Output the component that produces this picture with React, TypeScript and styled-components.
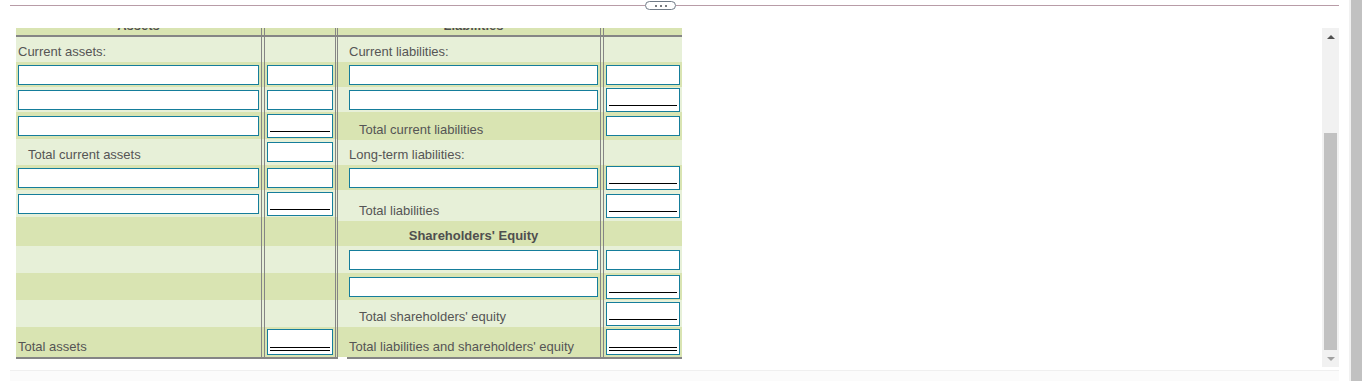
import React from 'react';
import styled, { createGlobalStyle } from 'styled-components';

type Amount = 'none' | 'plain' | 'single' | 'double';

interface Line {
  h: number; // row height
  text?: string;
  indent?: boolean; // subtotal lines sit a little to the right
  heading?: boolean; // bold centred section title
  field?: boolean; // account name input
  amount?: Amount;
}

const assetLines: Line[] = [
  { h: 25, text: 'Current assets:' },
  { h: 25, field: true, amount: 'plain' },
  { h: 25, field: true, amount: 'plain' },
  { h: 27, field: true, amount: 'single' },
  { h: 26, text: 'Total current assets', indent: true, amount: 'plain' },
  { h: 25, field: true, amount: 'plain' },
  { h: 27, field: true, amount: 'single' },
  { h: 29 },
  { h: 27 },
  { h: 27 },
  { h: 27 },
  { h: 30, text: 'Total assets', amount: 'double' },
];

const liabilityLines: Line[] = [
  { h: 25, text: 'Current liabilities:' },
  { h: 25, field: true, amount: 'plain' },
  { h: 25, field: true, amount: 'single' },
  { h: 28, text: 'Total current liabilities', indent: true, amount: 'plain' },
  { h: 25, text: 'Long-term liabilities:' },
  { h: 25, field: true, amount: 'single' },
  { h: 31, text: 'Total liabilities', indent: true, amount: 'single' },
  { h: 25, text: "Shareholders' Equity", heading: true },
  { h: 27, field: true, amount: 'plain' },
  { h: 27, field: true, amount: 'single' },
  { h: 27, text: "Total shareholders' equity", indent: true, amount: 'single' },
  { h: 30, text: "Total liabilities and shareholders' equity", amount: 'double' },
];

interface SideProps {
  title: string;
  lines: Line[];
  cols: string;
  spacer?: boolean; // right side has a narrow empty column in front
  last?: boolean;
}

const Side: React.FC<SideProps> = ({ title, lines, cols, spacer, last }) => (
  <Table>
    <HeadRow $cols={cols}>
      {spacer && <span />}
      <LabelCell>
        <Heading $lift={1}>{title}</Heading>
      </LabelCell>
      <AmountCell $last={last} />
    </HeadRow>
    {lines.map((line, i) => (
      <Row key={i} $cols={cols} $h={line.h} $dark={i % 2 === 1}>
        {spacer && <span />}
        <LabelCell $field={line.field}>
          {line.field && <TextBox />}
          {line.text &&
            (line.heading ? (
              <Heading $lift={0}>{line.text}</Heading>
            ) : (
              <Label $indent={line.indent}>{line.text}</Label>
            ))}
        </LabelCell>
        <AmountCell $last={last}>
          {line.amount && line.amount !== 'none' && (
            <AmountBox $kind={line.amount}>
              {line.amount !== 'plain' && <Underline $kind={line.amount} />}
            </AmountBox>
          )}
        </AmountCell>
      </Row>
    ))}
    <BottomRule $inset={spacer ? 9 : 0} />
  </Table>
);

const App: React.FC = () => (
  <>
    <GlobalStyle />
    <Page>
      <Main>
        <TopRule>
          <RuleLine />
          <MorePill>
            <Dot />
            <Dot />
            <Dot />
          </MorePill>
          <RuleLine />
        </TopRule>
        <Pane>
          <Viewport>
            <Sheet>
              <Side title="Assets" lines={assetLines} cols="249px 73px" />
              <Side
                title="Liabilities"
                lines={liabilityLines}
                cols="9px 257px 78px"
                spacer
                last
              />
            </Sheet>
          </Viewport>
          <ScrollBar>
            <ArrowButton>
              <ArrowUp />
            </ArrowButton>
            <Track>
              <Thumb />
            </Track>
            <ArrowButton>
              <ArrowDown />
            </ArrowButton>
          </ScrollBar>
        </Pane>
        <Footer />
      </Main>
      <PageScroll>
        <PageThumb />
      </PageScroll>
    </Page>
  </>
);

export default App;

const GlobalStyle = createGlobalStyle`
  * {
    box-sizing: border-box;
  }

  body {
    margin: 0;
    background: #fff;
    font-family: 'Liberation Sans', Arial, sans-serif;
  }
`;

const LIGHT = '#e7f0d8';
const DARK = '#d9e4b2';
const RULE = '#858585';
const TEAL = '#157d9b';

const Page = styled.div`
  display: flex;
  height: 381px;
  overflow: hidden;
`;

const Main = styled.div`
  flex: 1;
  display: flex;
  flex-direction: column;
  padding: 0 10px;
`;

const TopRule = styled.div`
  display: grid;
  grid-template-columns: 635px 31px 1fr;
  align-items: center;
  height: 11px;
  margin-bottom: 17px;
`;

const RuleLine = styled.div`
  height: 1px;
  background: #b89ca7;
`;

const MorePill = styled.div`
  display: flex;
  align-items: center;
  justify-content: center;
  gap: 3px;

  height: 9px;
  border: 1px solid #707b87;
  border-radius: 5px;
  background: #fff;
`;

const Dot = styled.span`
  width: 2px;
  height: 2px;
  border-radius: 50%;
  background: #4b4f55;
`;

const Pane = styled.div`
  display: flex;
  height: 339px;
`;

const Viewport = styled.div`
  flex: 1;
  overflow: hidden;
  padding-left: 6px;
`;

/* scrolled down a little, so the header row is mostly out of view */
const Sheet = styled.div`
  display: flex;
  align-items: flex-start;
  margin-top: -17px;
`;

const Table = styled.div`
  display: flex;
  flex-direction: column;
`;

interface RowProps {
  $cols: string;
  $h?: number;
  $dark?: boolean;
}

const Row = styled.div<RowProps>`
  display: grid;
  grid-template-columns: ${({ $cols }) => $cols};
  height: ${({ $h }) => $h}px;
  background: ${({ $dark }) => ($dark ? DARK : LIGHT)};
`;

const HeadRow = styled(Row)`
  height: 26px;
  background: ${DARK};
  border-bottom: 2px solid ${RULE};
`;

const LabelCell = styled.div<{ $field?: boolean }>`
  display: flex;
  align-items: ${({ $field }) => ($field ? 'center' : 'flex-end')};
  padding: ${({ $field }) => ($field ? '0 2px' : '0 2px 3px')};
  border-right: 4px double ${RULE};
`;

const AmountCell = styled.div<{ $last?: boolean }>`
  display: flex;
  align-items: center;
  padding: 0 2px;
  border-right: ${({ $last }) => ($last ? 'none' : `3px double ${RULE}`)};
`;

const Label = styled.span<{ $indent?: boolean }>`
  padding-left: ${({ $indent }) => ($indent ? '10px' : '0')};
  font-size: 13px;
  line-height: 15px;
  color: #555;
  white-space: nowrap;
`;

const Heading = styled.span<{ $lift: number }>`
  width: 100%;
  margin-bottom: ${({ $lift }) => -$lift}px;
  text-align: center;
  font-size: 13px;
  font-weight: 700;
  line-height: 15px;
  color: #4f4f4f;
`;

const TextBox = styled.div`
  width: 100%;
  height: 20px;
  border: 1px solid ${TEAL};
  background: #fff;
`;

const boxHeight = { none: 0, plain: 20, single: 24, double: 26 };

const AmountBox = styled.div<{ $kind: Amount }>`
  display: flex;
  align-items: flex-end;
  width: 100%;
  height: ${({ $kind }) => boxHeight[$kind]}px;
  padding: 0 2px;
  border: 1px solid ${TEAL};
  background: #fff;
`;

const Underline = styled.div<{ $kind: Amount }>`
  width: 100%;
  margin-bottom: ${({ $kind }) => ($kind === 'double' ? '3px' : '5px')};
  border-bottom: ${({ $kind }) =>
    $kind === 'double' ? '4px double #000' : '1px solid #000'};
`;

const BottomRule = styled.div<{ $inset: number }>`
  height: 2px;
  margin-left: ${({ $inset }) => $inset}px;
  background: ${RULE};
`;

const ScrollBar = styled.div`
  display: flex;
  flex-direction: column;
  width: 17px;
  background: #f1f1f1;
`;

const ArrowButton = styled.div`
  display: flex;
  align-items: center;
  justify-content: center;
  height: 17px;
`;

const ArrowUp = styled.span`
  width: 0;
  height: 0;
  border-left: 4px solid transparent;
  border-right: 4px solid transparent;
  border-bottom: 4px solid #505050;
`;

const ArrowDown = styled.span`
  width: 0;
  height: 0;
  border-left: 4px solid transparent;
  border-right: 4px solid transparent;
  border-top: 4px solid #a3a3a3;
`;

const Track = styled.div`
  flex: 1;
  display: flex;
  flex-direction: column;
  justify-content: flex-end;
  align-items: center;
`;

const Thumb = styled.div`
  width: 13px;
  height: 217px;
  background: #c1c1c1;
`;

const Footer = styled.div`
  flex: 1;
  margin-top: 3px;
  border-top: 1px solid #efefef;
  background: #fbfbfb;
`;

const PageScroll = styled.div`
  display: flex;
  width: 13px;
  padding-left: 2px;
  background: #f1f1f1;
`;

const PageThumb = styled.div`
  flex: 1;
  background: #c1c1c1;
`;
